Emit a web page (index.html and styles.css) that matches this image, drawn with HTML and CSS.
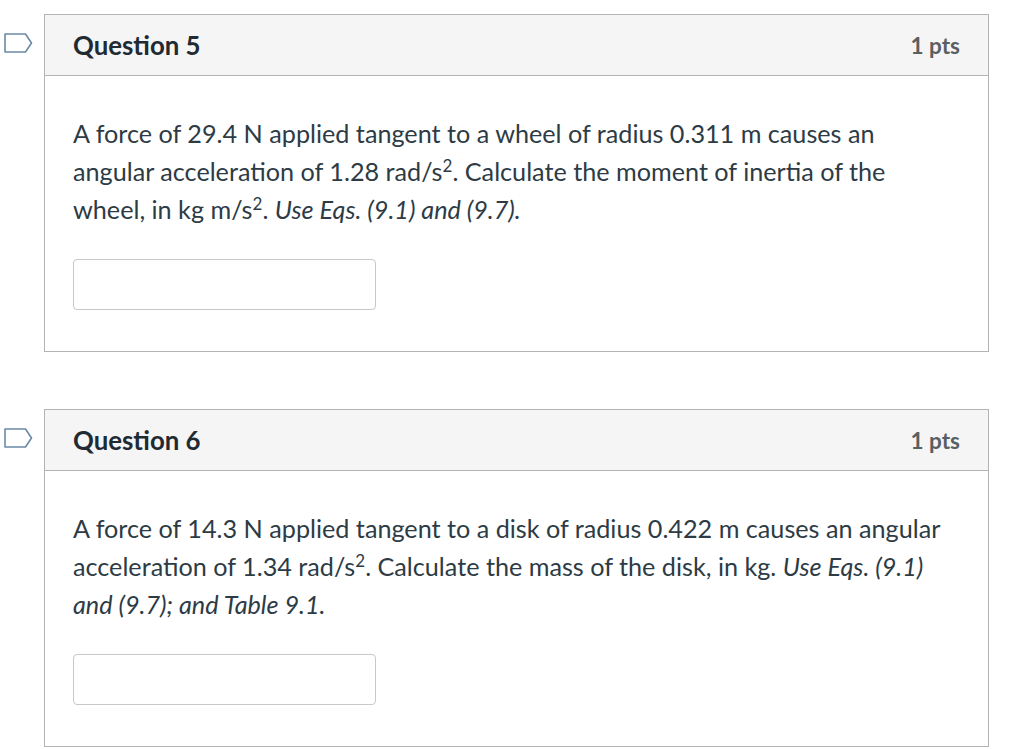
FILE: index.html
```html
<!DOCTYPE html>
<html>
<head>
<meta charset="utf-8">
<link rel="stylesheet" href="styles.css">
</head>
<body>
<div class="page">
  <div class="question">
    <div class="flag-col">
      <svg class="flag" width="29" height="20" viewBox="0 0 29 20"><path d="M1 1 H21.5 L27.5 10 L21.5 19 H1 Z" fill="none" stroke="#6a8aa6" stroke-width="1.6" stroke-linejoin="round"/></svg>
    </div>
    <div class="box">
      <div class="header">
        <span class="title">Question 5</span>
        <span class="pts">1 pts</span>
      </div>
      <div class="body">
        <p class="text">A force of 29.4 N applied tangent to a wheel of radius 0.311 m causes an angular acceleration of 1.28 rad/s<sup>2</sup>. Calculate the moment of inertia of the wheel, in kg m/s<sup>2</sup>. <em>Use Eqs. (9.1) and (9.7).</em></p>
        <div class="answer"></div>
      </div>
    </div>
  </div>
  <div class="question">
    <div class="flag-col">
      <svg class="flag" width="29" height="20" viewBox="0 0 29 20"><path d="M1 1 H21.5 L27.5 10 L21.5 19 H1 Z" fill="none" stroke="#6a8aa6" stroke-width="1.6" stroke-linejoin="round"/></svg>
    </div>
    <div class="box">
      <div class="header">
        <span class="title">Question 6</span>
        <span class="pts">1 pts</span>
      </div>
      <div class="body">
        <p class="text">A force of 14.3 N applied tangent to a disk of radius 0.422 m causes an angular acceleration of 1.34 rad/s<sup>2</sup>. Calculate the mass of the disk, in kg. <em>Use Eqs. (9.1) and (9.7); and Table 9.1.</em></p>
        <div class="answer"></div>
      </div>
    </div>
  </div>
</div>
</body>
</html>
```

FILE: styles.css
```css
html, body {
  margin: 0;
  padding: 0;
  background: #ffffff;
}
body {
  font-family: Lato, "Open Sans", sans-serif;
  color: #2d3b45;
}
.page {
  padding: 14px 20px 0 0;
  display: flex;
  flex-direction: column;
  gap: 57px;
}
.question {
  display: flex;
}
.flag-col {
  width: 44px;
  flex: none;
  padding-top: 19px;
  padding-left: 4px;
  box-sizing: border-box;
}
.flag {
  display: block;
}
.box {
  flex: 1;
  border: 1px solid #b4b4b4;
}
.header {
  background: #f5f5f5;
  border-bottom: 1px solid #b4b4b4;
  height: 60px;
  display: flex;
  align-items: center;
  justify-content: space-between;
  padding: 0 28px 0 28px;
}
.title {
  font-weight: 700;
  font-size: 25.8px;
  color: #1f2a33;
}
.pts {
  font-weight: 700;
  font-size: 22.5px;
  color: #5a5f63;
}
.body {
  padding: 38px 28px 41px 28px;
}
.text {
  margin: 0;
  font-size: 25.2px;
  line-height: 38px;
  color: #2d3b45;
}
.text sup {
  font-size: 17px;
  line-height: 0;
}
.answer {
  margin-top: 31px;
  width: 301px;
  height: 49px;
  border: 1px solid #c8c8c8;
  border-radius: 4px;
}
```
